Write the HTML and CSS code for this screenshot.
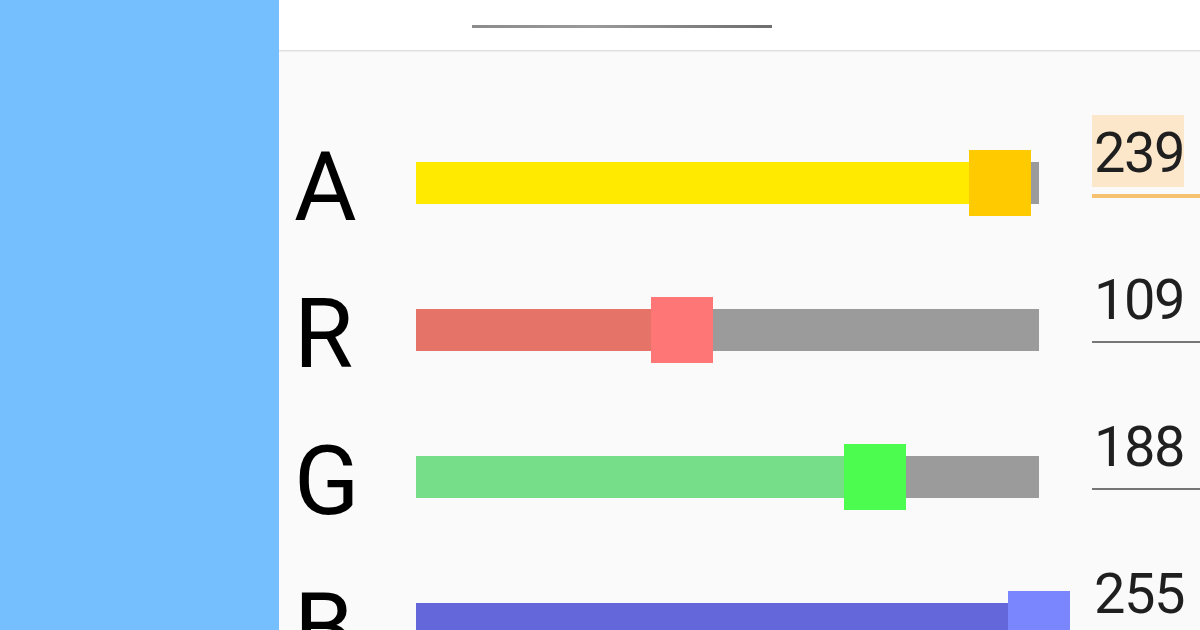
FILE: index.html
```html
<!DOCTYPE html>
<html>
<head>
<meta charset="utf-8">
<link rel="stylesheet" href="styles.css">
</head>
<body>
<div class="app">
  <aside class="side"></aside>
  <main class="main">
    <header class="bar"><div class="field-line"></div></header>
    <section class="rows">
      <div class="row">
        <div class="letter">A</div>
        <div class="track">
          <div class="fill fill-a" style="width:93.73%"></div>
          <div class="thumb thumb-a" style="left:calc(93.73% - 31px)"></div>
        </div>
        <div class="value active"><span class="num sel">239</span></div>
      </div>
      <div class="row">
        <div class="letter">R</div>
        <div class="track">
          <div class="fill fill-r" style="width:42.75%"></div>
          <div class="thumb thumb-r" style="left:calc(42.75% - 31px)"></div>
        </div>
        <div class="value"><span class="num">109</span></div>
      </div>
      <div class="row">
        <div class="letter">G</div>
        <div class="track">
          <div class="fill fill-g" style="width:73.73%"></div>
          <div class="thumb thumb-g" style="left:calc(73.73% - 31px)"></div>
        </div>
        <div class="value"><span class="num">188</span></div>
      </div>
      <div class="row">
        <div class="letter">B</div>
        <div class="track">
          <div class="fill fill-b" style="width:100%"></div>
          <div class="thumb thumb-b" style="left:calc(100% - 31px)"></div>
        </div>
        <div class="value"><span class="num">255</span></div>
      </div>
    </section>
  </main>
</div>
</body>
</html>
```

FILE: styles.css
```css
html, body {
  margin: 0;
  padding: 0;
  width: 1200px;
  height: 630px;
  overflow: hidden;
  font-family: Roboto, "Noto Sans", sans-serif;
}
.app {
  display: flex;
  width: 1200px;
  height: 630px;
}
.side {
  width: 279px;
  flex: none;
  background: #75bfff;
}
.main {
  flex: 1;
  background: #fafafa;
  display: flex;
  flex-direction: column;
  overflow: hidden;
}
.bar {
  height: 50px;
  flex: none;
  background: #ffffff;
  border-bottom: 1px solid #dedede;
  box-shadow: 0 1px 1px rgba(0,0,0,0.04);
  display: flex;
  align-items: flex-start;
}
.field-line {
  margin-left: 193px;
  margin-top: 25px;
  width: 300px;
  height: 3px;
  background: linear-gradient(to right, #8c8c8c, #9a9a9a 40%, #6e6e6e);
}
.rows {
  padding-top: 58px;
  padding-left: 16px;
  display: flex;
  flex-direction: column;
}
.row {
  height: 147px;
  flex: none;
  display: grid;
  grid-template-columns: 121px 623px 53px 108px;
  align-items: center;
}
.letter {
  font-size: 96px;
  line-height: 1;
  color: #000;
  padding-top: 9px;
  margin-left: -1px;
}
.track {
  position: relative;
  height: 42px;
  background: #9b9b9b;
}
.fill {
  position: absolute;
  left: 0;
  top: 0;
  bottom: 0;
}
.thumb {
  position: absolute;
  top: -12px;
  width: 62px;
  height: 66px;
}
.fill-a { background: #ffea00; }
.thumb-a { background: #ffcb00; }
.fill-r { background: #e57368; }
.thumb-r { background: #ff7676; }
.fill-g { background: #76de89; }
.thumb-g { background: #4cfd4f; }
.fill-b { background: #6367da; }
.thumb-b { background: #7a86fe; }
.value {
  grid-column: 4;
  align-self: start;
  margin-top: 6px;
  padding-bottom: 7px;
  border-bottom: 2px solid #767676;
  width: 120px;
}
.value.active {
  border-bottom: 4px solid #f6c270;
}
.num {
  display: inline-block;
  box-sizing: border-box;
  width: 92px;
  height: 72px;
  padding-top: 4px;
  padding-left: 2px;
  font-size: 56px;
  letter-spacing: -1.5px;
  line-height: 68px;
  color: #1f1f1f;
  white-space: nowrap;
  vertical-align: top;
}
.num.sel {
  background: #fde7cb;
}
```
